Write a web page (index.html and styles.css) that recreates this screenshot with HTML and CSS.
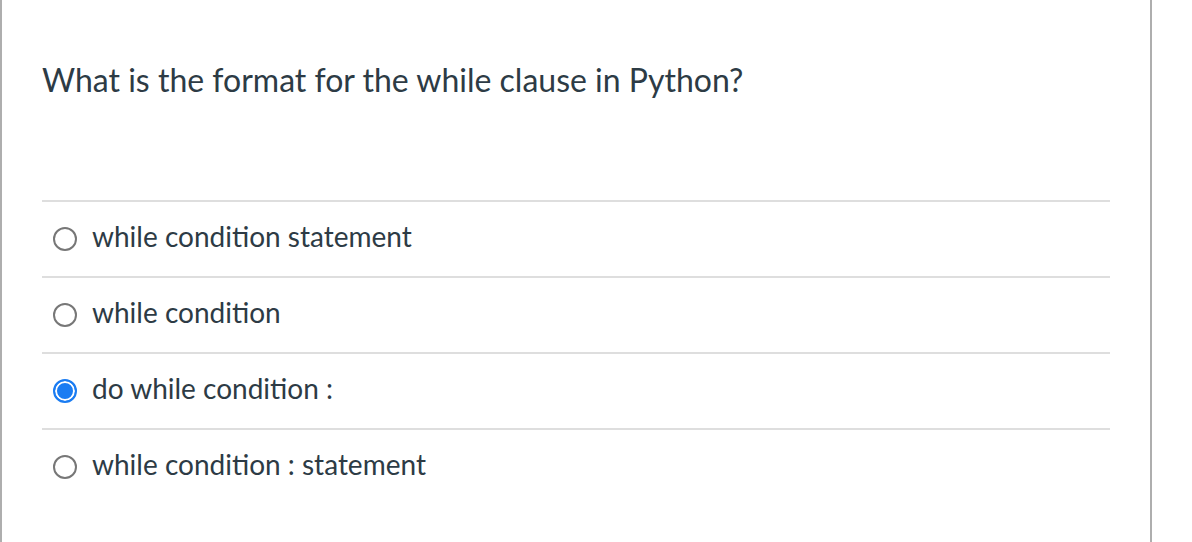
FILE: index.html
```html
<!DOCTYPE html>
<html>
<head>
    <meta charset="UTF-8">
    <title>Quiz Question</title>
    <!-- Styling for the quiz question -->
    <link rel="stylesheet" href="styles.css">
</head>
<body>
<div class="question-container">
    <div class="question-text">What is the format for the while clause in Python?</div>
    <!-- Answer choices -->
    <div class="answers">
        <label class="answer">
            <input type="radio" name="answer" value="1">
            <span class="answer-text">while condition statement</span>
        </label>
        <label class="answer">
            <input type="radio" name="answer" value="2">
            <span class="answer-text">while condition</span>
        </label>
        <label class="answer">
            <input type="radio" name="answer" value="3" checked>
            <span class="answer-text">do while condition :</span>
        </label>
        <label class="answer">
            <input type="radio" name="answer" value="4">
            <span class="answer-text">while condition : statement</span>
        </label>
    </div>
</div>
</body>
</html>
```

FILE: styles.css
```css
/* Body styling */
body {
    font-family: Lato, "Open Sans", sans-serif;
    background-color: #fff;
    color: #2d3b45;
    margin: 0;
    padding: 0;
}

/* Question container */
.question-container {
    width: 1152px;
    min-height: 542px;
    box-sizing: border-box;
    border-left: 2px solid #aeaeae;
    border-right: 2px solid #aeaeae;
    padding: 60px 40px 0 40px;
}

/* Question text */
.question-text {
    font-size: 32px;
    line-height: 40px;
    margin-bottom: 100px;
}

/* Answer rows */
.answer {
    display: flex;
    align-items: center;
    height: 74px;
    border-top: 2px solid #dedede;
    cursor: pointer;
}

/* Radio buttons */
.answer input[type="radio"] {
    appearance: none;
    -webkit-appearance: none;
    width: 24px;
    height: 24px;
    margin: 0 15px 0 11px;
    border: 2px solid #777;
    border-radius: 50%;
    box-sizing: border-box;
    background-color: #fff;
    flex-shrink: 0;
}

.answer input[type="radio"]:checked {
    border-color: #1a7cf2;
    background-color: #1a7cf2;
    box-shadow: inset 0 0 0 2px #fff;
}

/* Answer label text */
.answer-text {
    font-size: 28px;
    line-height: 30px;
    margin-top: -7px;
}
```
